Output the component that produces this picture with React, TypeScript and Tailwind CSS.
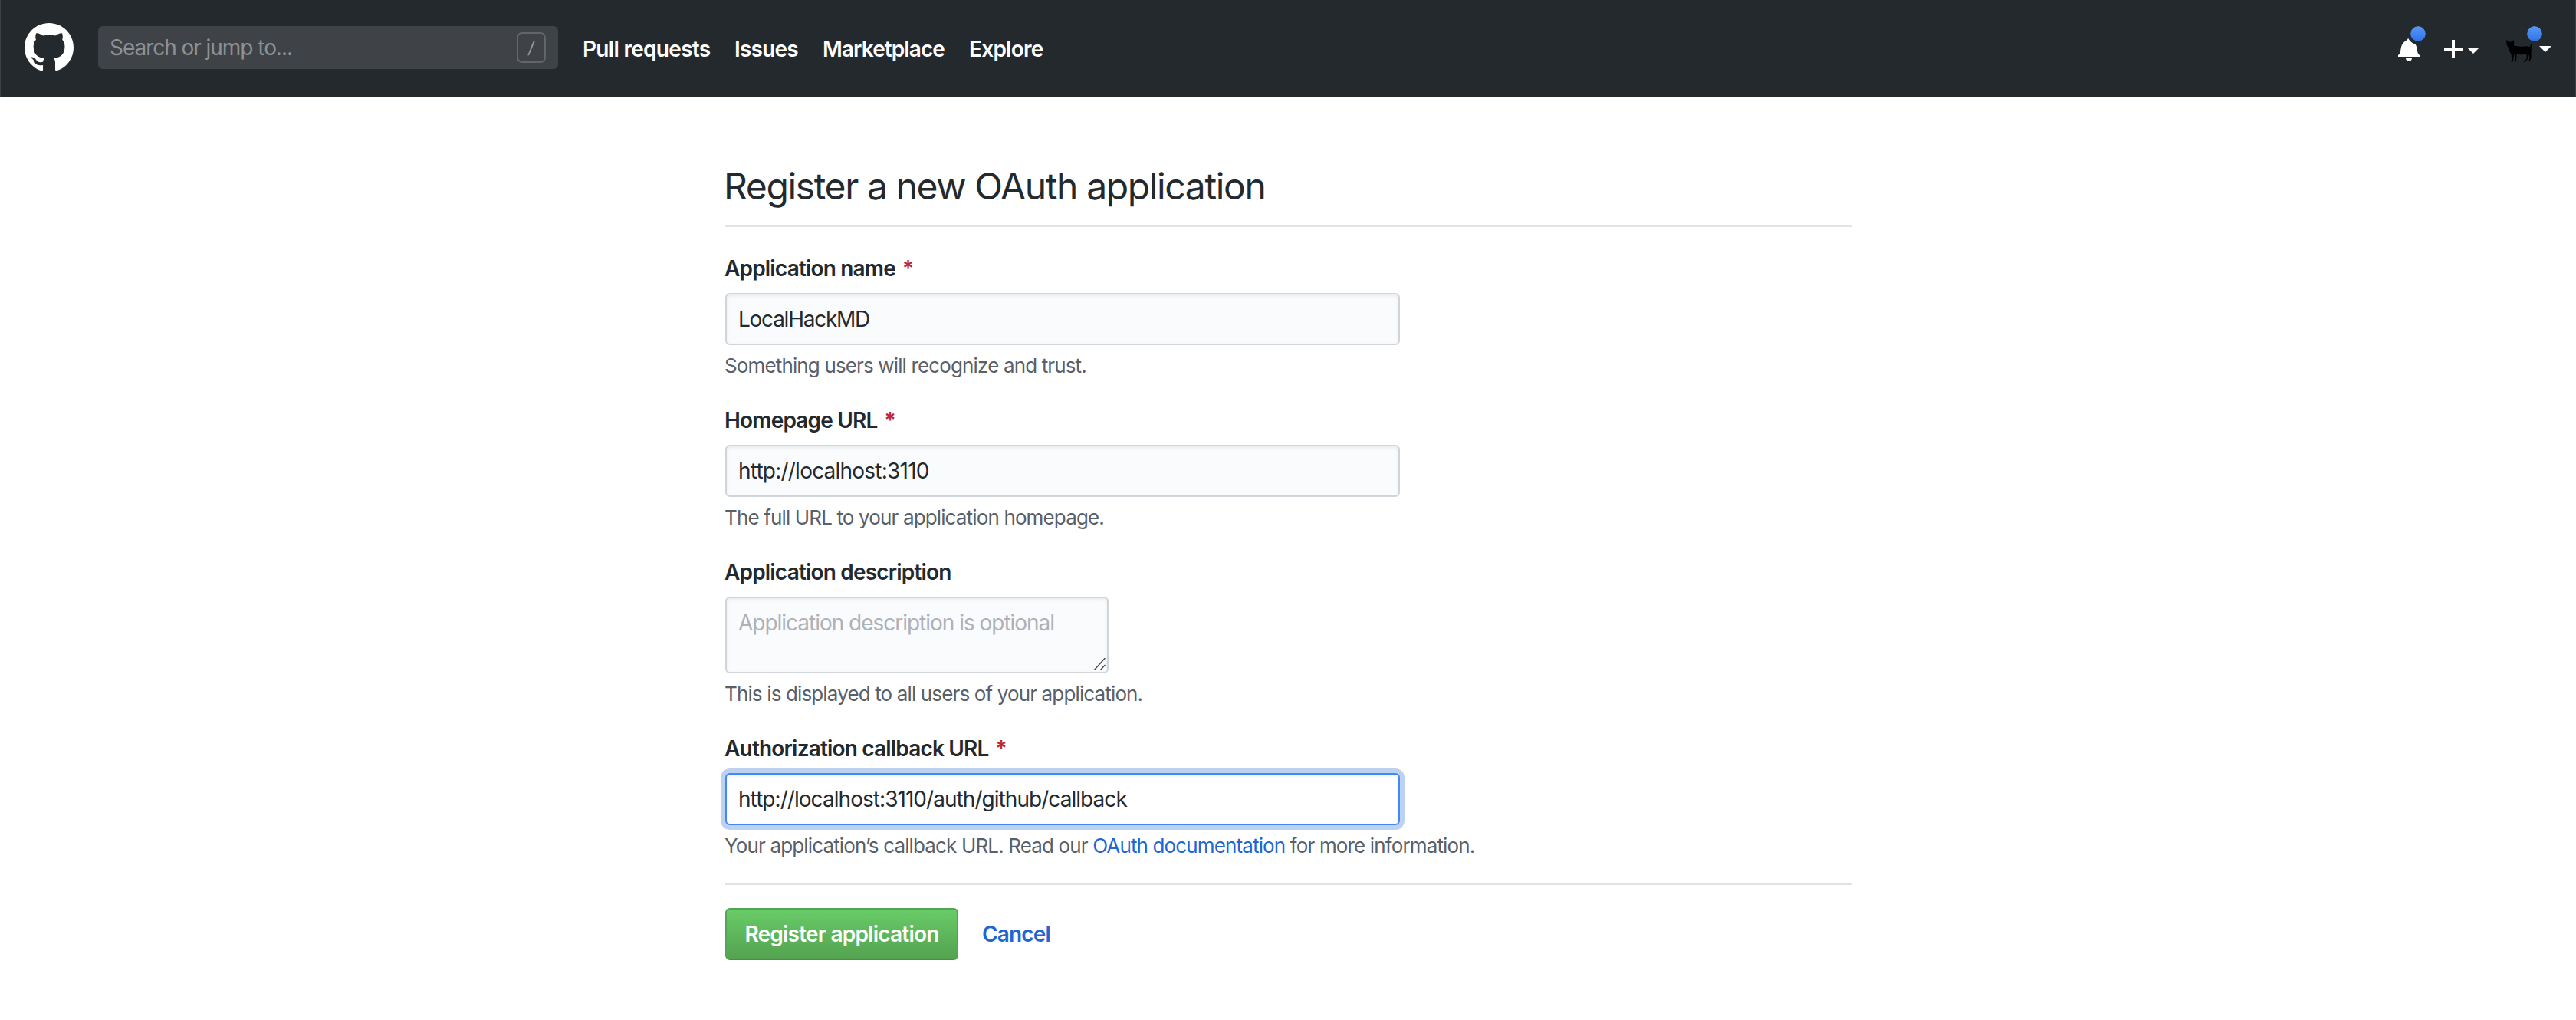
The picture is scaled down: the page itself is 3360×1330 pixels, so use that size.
import type { ReactNode } from "react";

function GitHubMark() {
  return (
    <svg className="size-16 shrink-0" viewBox="0 0 16 16" fill="#fff">
      <path
        fillRule="evenodd"
        d="M8 0C3.58 0 0 3.58 0 8c0 3.54 2.29 6.53 5.47 7.59.4.07.55-.17.55-.38 0-.19-.01-.82-.01-1.49-2.01.37-2.53-.49-2.69-.94-.09-.23-.48-.94-.82-1.13-.28-.15-.68-.52-.01-.53.63-.01 1.08.58 1.23.82.72 1.21 1.87.87 2.33.66.07-.52.28-.87.51-1.07-1.78-.2-3.64-.89-3.64-3.95 0-.87.31-1.59.82-2.15-.08-.2-.36-1.02.08-2.12 0 0 .67-.21 2.2.82.64-.18 1.32-.27 2-.27.68 0 1.36.09 2 .27 1.53-1.04 2.2-.82 2.2-.82.44 1.1.16 1.92.08 2.12.51.56.82 1.27.82 2.15 0 3.07-1.87 3.75-3.65 3.95.29.25.54.73.54 1.48 0 1.07-.01 1.93-.01 2.2 0 .21.15.46.55.38A8.013 8.013 0 0 0 16 8c0-4.42-3.58-8-8-8z"
      />
    </svg>
  );
}

function SlashKey() {
  return (
    <svg className="h-10 w-[38px]" viewBox="0 0 19 20">
      <path
        fill="none"
        stroke="#979A9C"
        opacity=".4"
        d="M3.5.5h12c1.7 0 3 1.3 3 3v13c0 1.7-1.3 3-3 3h-12c-1.7 0-3-1.3-3-3v-13c0-1.7 1.3-3 3-3z"
      />
      <path fill="#979A9C" d="M11.8 6L8 15.1h-.9L10.8 6h1z" />
    </svg>
  );
}

function Bell() {
  return (
    <svg className="h-8 w-7" viewBox="0 0 14 16" fill="#fff">
      <path
        fillRule="evenodd"
        d="M14 12v1H0v-1l.73-.58c.77-.77.81-2.55 1.19-4.42C2.69 3.23 6 2 6 2c0-.55.45-1 1-1s1 .45 1 1c0 0 3.39 1.23 4.16 5 .38 1.88.42 3.66 1.19 4.42l.66.58H14zm-7 4c1.11 0 2-.89 2-2H5c0 1.11.89 2 2 2z"
      />
    </svg>
  );
}

function Plus() {
  return (
    <svg className="h-8 w-6" viewBox="0 0 12 16" fill="#fff">
      <path d="M12 9H7v5H5V9H0V7h5V2h2v5h5v2z" />
    </svg>
  );
}

function Caret() {
  return (
    <svg className="h-2 w-4" viewBox="0 0 16 8" fill="#fff">
      <path d="M0 0h16L8 8z" />
    </svg>
  );
}

function Cat() {
  return (
    <svg className="h-[29px] w-[33px]" viewBox="0 0 99 87" fill="#000">
      <path d="M0 0L12 7L21 8L29 0L31 15L29 21L38 24L58 26C70 28 80 22 88 27C95 27 97 23 96 16L93 18L98 12L100 16C101 22 99 28 97 32C100 40 99 48 97 52L98 67C97 75 95 79 91 84H87L92 70L88 58C85 62 87 68 85 73C81 80 77 84 70 87H67L79 74L80 60L76 54C64 59 52 59 41 55L39 84L34 87L33 60L30 57L27 84L20 87H18L22 82L20 56C15 50 12 43 11 34L3 22L1 12Z" />
    </svg>
  );
}

function Dot({ className }: { className: string }) {
  return (
    <span
      className={`absolute size-7 rounded-full border-4 border-[#24292e] bg-linear-to-b from-[#61a0f8] to-[#2669e4] bg-origin-border bg-clip-padding ${className}`}
    />
  );
}

function Header() {
  return (
    <header className="flex h-[126px] items-center border-x border-[#3d4145] bg-[#24292e] pb-0.5 pl-[31px] pr-[31px] font-semibold text-white">
      <GitHubMark />
      <div className="ml-8 flex h-14 w-[600px] items-center justify-between rounded-md bg-[#3f4348] pl-[15px] pr-4 font-normal text-[#8e9194]">
        <span className="tracking-[-1.04px]">Search or jump to...</span>
        <SlashKey />
      </div>
      <nav className="mt-1 ml-[31px] flex whitespace-nowrap leading-10">
        <a className="w-[199px] pl-px tracking-[-0.7px]">Pull requests</a>
        <a className="w-[115px] tracking-[-0.77px]">Issues</a>
        <a className="w-[191px] tracking-[-0.91px]">Marketplace</a>
        <a className="tracking-[-0.75px]">Explore</a>
      </nav>
      <div className="mt-1 ml-auto flex items-center">
        <div className="relative">
          <Bell />
          <Dot className="-top-[18px] left-3" />
        </div>
        <div className="ml-8 flex items-center gap-1.5">
          <Plus />
          <div className="pt-1">
            <Caret />
          </div>
        </div>
        <div className="relative ml-[35px] flex items-center gap-2.5">
          <div className="pt-[5px]">
            <Cat />
          </div>
          <Caret />
          <Dot className="-top-[17px] left-[23px]" />
        </div>
      </div>
    </header>
  );
}

function Field({
  label,
  required,
  note,
  children,
}: {
  label: string;
  required?: boolean;
  note: ReactNode;
  children: ReactNode;
}) {
  return (
    <div>
      <div className="-ml-px flex h-[42px] items-center gap-[9px] font-semibold">
        <span className="tracking-[-0.82px]">{label}</span>
        {required && <span className="text-[#c0282f] tracking-normal">*</span>}
      </div>
      <div className="mt-[11px]">{children}</div>
      <p className="-ml-px mt-[7px] h-[39px] text-[26px] leading-10 tracking-[-0.86px] text-[#586069]">
        {note}
      </p>
    </div>
  );
}

const box =
  "flex h-[68px] w-[880px] items-center rounded-md border-2 pl-[15px]";
const idle =
  "border-[#d1d5da] bg-[#fafbfc] shadow-[inset_0_2px_4px_rgba(27,31,35,0.075)]";

export default function App() {
  return (
    <div className="min-h-[1330px] bg-white font-['Inter',sans-serif] text-[28px] text-[#24292e]">
      <Header />
      <main className="ml-[946px] w-[1470px] pt-[81px]">
        <h1 className="h-[89px] border-b-2 border-[#e1e4e8] text-[48px] leading-[72px] tracking-[-1.38px]">
          <span className="-ml-0.5">Register a new OAuth application</span>
        </h1>
        <div className="mt-[33px] flex flex-col gap-[31px]">
          <Field label="Application name" required note="Something users will recognize and trust.">
            <div className={`${box} ${idle}`}>
              <span className="tracking-[-1.25px]">LocalHackMD</span>
            </div>
          </Field>
          <Field label="Homepage URL" required note="The full URL to your application homepage.">
            <div className={`${box} ${idle}`}>
              <span className="tracking-[-0.78px]">http://localhost:3110</span>
            </div>
          </Field>
          <Field
            label="Application description"
            note="This is displayed to all users of your application."
          >
            <div
              className={`relative h-[100px] w-[500px] rounded-md border-2 pt-3 pl-[15px] leading-10 tracking-[-1.02px] text-[#aeb1b8] ${idle}`}
            >
              Application description is optional
              <svg
                className="absolute right-0.5 bottom-0.5 size-4"
                viewBox="0 0 16 16"
                fill="none"
                stroke="#4a4d50"
                strokeWidth="1.5"
              >
                <path d="M1 16L15.5 0M9 16L15.5 9" />
              </svg>
            </div>
          </Field>
          <Field
            label="Authorization callback URL"
            required
            note={
              <>
                Your application’s callback URL. Read our{" "}
                <a className="tracking-[-0.86px] text-[#2266d2]">OAuth documentation</a> for more
                information.
              </>
            }
          >
            <div
              className={`${box} border-[#4189f5] bg-white shadow-[inset_0_2px_4px_rgba(27,31,35,0.075),0_0_0_6px_#bed1f1]`}
            >
              <span className="tracking-[-0.95px]">http://localhost:3110/auth/github/callback</span>
            </div>
          </Field>
        </div>
        <div className="mt-[30px] flex items-center border-t-2 border-[#e2e2e3] pt-[30px] font-semibold">
          <button className="h-[68px] w-[304px] rounded-md border-2 border-[#54a456] border-b-[#498d4a] bg-linear-to-b from-[#69cb68] to-[#54a350] tracking-[-0.78px] text-white">
            Register application
          </button>
          <a className="ml-[31px] tracking-[-0.84px] text-[#2266d2]">Cancel</a>
        </div>
      </main>
    </div>
  );
}
